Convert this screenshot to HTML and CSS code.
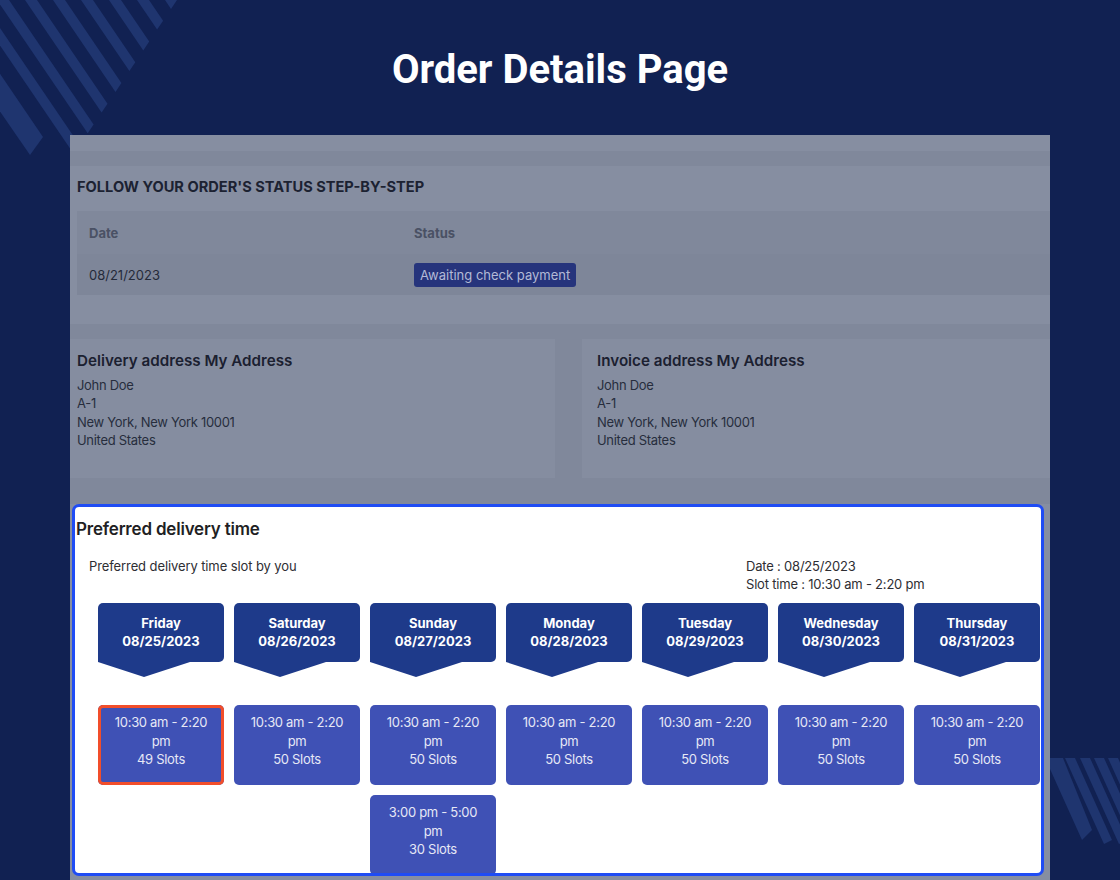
FILE: index.html
```html
<!DOCTYPE html>
<html lang="en">
<head>
<meta charset="utf-8">
<title>Order Details Page</title>
<link rel="stylesheet" href="styles.css">
</head>
<body>
<svg class="deco deco-tl" width="200" height="170" viewBox="0 0 200 170" aria-hidden="true">
  <g fill="#1f356f">
    <polygon points="165,0 177,0 171,8.9"/>
    <polygon points="137,0 149,0 163.1,20.7 157.1,29.6"/>
    <polygon points="109,0 121,0 149.2,41.5 143.3,50.4"/>
    <polygon points="81,0 93,0 135.3,62.2 129.4,71.1"/>
    <polygon points="53,0 65,0 121.4,83 115.5,91.9"/>
    <polygon points="25,0 37,0 107.5,103.7 101.6,112.6"/>
    <polygon points="-3,0 9,0 93.6,124.4 87.7,133.3"/>
    <polygon points="-31,0 -19,0 79.7,145.2 73.8,154.1"/>
    <polygon points="-77,0 -50,0 43,137 30,155"/>
  </g>
</svg>
<svg class="deco deco-br" width="80" height="110" viewBox="0 0 80 110" aria-hidden="true">
  <defs><clipPath id="brc"><rect x="10" y="18" width="70" height="92"/></clipPath></defs>
  <g fill="#1f356f" clip-path="url(#brc)">
    <polygon points="5,18 23,18 52,90 42,100"/>
    <polygon points="25,18 35,18 72,100 64,104"/>
    <polygon points="40,18 50,18 87,100 79,104"/>
    <polygon points="54,18 64,18 101,100 93,104"/>
    <polygon points="68,18 78,18 115,100 107,104"/>
  </g>
</svg>

<header class="hero">
  <h1 class="hero-title">Order Details Page</h1>
</header>

<main class="page">
  <div class="bar bar-light"></div>
  <div class="bar bar-dark"></div>

  <section class="status">
    <h2 class="status-title">FOLLOW YOUR ORDER'S STATUS STEP-BY-STEP</h2>
    <div class="status-table">
      <div class="status-row status-head">
        <div class="cell">Date</div>
        <div class="cell">Status</div>
      </div>
      <div class="status-row status-body">
        <div class="cell">08/21/2023</div>
        <div class="cell"><span class="badge">Awaiting check payment</span></div>
      </div>
    </div>
  </section>

  <section class="addresses">
    <div class="addr-card addr-left">
      <h3 class="addr-title">Delivery address My Address</h3>
      <p class="addr-lines">John Doe<br>A-1<br>New York, New York 10001<br>United States</p>
    </div>
    <div class="addr-card addr-right">
      <h3 class="addr-title">Invoice address My Address</h3>
      <p class="addr-lines">John Doe<br>A-1<br>New York, New York 10001<br>United States</p>
    </div>
  </section>

  <section class="delivery">
    <h2 class="delivery-title">Preferred delivery time</h2>
    <div class="delivery-info">
      <p class="info-left">Preferred delivery time slot by you</p>
      <p class="info-right">Date : 08/25/2023<br>Slot time : 10:30 am - 2:20 pm</p>
    </div>
    <div class="days">
      <div class="day">
        <div class="day-head">Friday<br>08/25/2023</div>
        <div class="slots">
          <div class="slot selected">10:30 am - 2:20 pm<br>49 Slots</div>
        </div>
      </div>
      <div class="day">
        <div class="day-head">Saturday<br>08/26/2023</div>
        <div class="slots">
          <div class="slot">10:30 am - 2:20 pm<br>50 Slots</div>
        </div>
      </div>
      <div class="day">
        <div class="day-head">Sunday<br>08/27/2023</div>
        <div class="slots">
          <div class="slot">10:30 am - 2:20 pm<br>50 Slots</div>
          <div class="slot">3:00 pm - 5:00 pm<br>30 Slots</div>
        </div>
      </div>
      <div class="day">
        <div class="day-head">Monday<br>08/28/2023</div>
        <div class="slots">
          <div class="slot">10:30 am - 2:20 pm<br>50 Slots</div>
        </div>
      </div>
      <div class="day">
        <div class="day-head">Tuesday<br>08/29/2023</div>
        <div class="slots">
          <div class="slot">10:30 am - 2:20 pm<br>50 Slots</div>
        </div>
      </div>
      <div class="day">
        <div class="day-head">Wednesday<br>08/30/2023</div>
        <div class="slots">
          <div class="slot">10:30 am - 2:20 pm<br>50 Slots</div>
        </div>
      </div>
      <div class="day">
        <div class="day-head">Thursday<br>08/31/2023</div>
        <div class="slots">
          <div class="slot">10:30 am - 2:20 pm<br>50 Slots</div>
        </div>
      </div>
    </div>
  </section>
</main>
</body>
</html>
```

FILE: styles.css
```css
* { box-sizing: border-box; }

html, body {
  margin: 0;
  padding: 0;
}

body {
  width: 1120px;
  height: 880px;
  overflow: hidden;
  background: #112152;
  font-family: Inter, "Noto Sans", sans-serif;
  position: relative;
}

.deco {
  position: absolute;
  z-index: 0;
}
.deco-tl { left: 0; top: 0; }
.deco-br { left: 1040px; top: 740px; }

.hero {
  position: relative;
  z-index: 1;
  height: 135px;
  padding-top: 47px;
}

.hero-title {
  margin: 0;
  text-align: center;
  font-family: Roboto, "Liberation Sans", sans-serif;
  font-weight: 700;
  font-size: 40px;
  line-height: 46px;
  color: #ffffff;
}

.page {
  position: relative;
  z-index: 1;
  margin-left: 70px;
  width: 980px;
  height: 745px;
  background: #868ea1;
  overflow: hidden;
}

.bar { height: 15px; }
.bar-light { height: 16px; background: #868ea1; }
.bar-dark { background: #80889b; }

.status {
  background: #868ea1;
  padding: 11px 0 29px 7px;
}

.status-title {
  margin: 0 0 14px;
  font-size: 14.6px;
  line-height: 20px;
  font-weight: 700;
  color: #1c2232;
  letter-spacing: 0;
}

.status-table {
  background: #80889b;
}

.status-row {
  display: grid;
  grid-template-columns: 325px 1fr;
  align-items: center;
}

.status-head {
  height: 43px;
  background: #80889b;
}

.status-body {
  height: 41px;
  background: #7e8699;
}

.cell {
  padding-left: 12px;
  font-size: 13px;
  color: #252b3a;
}

.status-head .cell {
  font-weight: 700;
  color: #4a5164;
}

.badge {
  display: inline-block;
  height: 24px;
  line-height: 24px;
  padding: 0 6px;
  border-radius: 3px;
  background: #26347c;
  color: #b3bad6;
  font-size: 13px;
  letter-spacing: 0;
}

.addresses {
  display: flex;
  gap: 27px;
  background: #80889b;
  padding: 15px 0 26px;
}

.addr-card {
  height: 139px;
  background: #858da0;
  padding-top: 12px;
}

.addr-left {
  width: 485px;
  padding-left: 7px;
}

.addr-right {
  flex: 1;
  padding-left: 15px;
}

.addr-title {
  margin: 0 0 5px;
  font-size: 15.2px;
  line-height: 20px;
  font-weight: 600;
  color: #1b2030;
  letter-spacing: 0;
}

.addr-lines {
  margin: 0;
  font-size: 13px;
  line-height: 18.3px;
  color: #272d3d;
  letter-spacing: -0.3px;
}

.delivery {
  margin-left: 2px;
  width: 972px;
  height: 372px;
  background: #ffffff;
  border: 3px solid #1f4cf4;
  border-radius: 7px;
  padding: 10px 0 0 1px;
  overflow: hidden;
}

.delivery-title {
  margin: 0;
  font-size: 17px;
  line-height: 24px;
  font-weight: 600;
  color: #1f1f24;
  letter-spacing: -0.2px;
}

.delivery-info {
  display: flex;
  margin-top: 16px;
  font-size: 13px;
  line-height: 18px;
  color: #2e2e33;
  letter-spacing: -0.1px;
}

.info-left {
  flex: 1;
  margin: 0;
  padding-left: 13px;
}

.info-right {
  width: 295px;
  margin: 0;
  letter-spacing: -0.2px;
}

.days {
  display: flex;
  gap: 10px;
  margin: 10px 0 0 22px;
}

.day {
  width: 126px;
  display: flex;
  flex-direction: column;
}

.day-head {
  position: relative;
  height: 59px;
  padding-top: 11px;
  background: #1e3a8a;
  border-radius: 5px;
  color: #ffffff;
  font-size: 13px;
  line-height: 18px;
  font-weight: 700;
  text-align: center;
}

.day-head::after {
  content: "";
  position: absolute;
  left: 0;
  top: 100%;
  width: 92px;
  height: 15px;
  background: #1e3a8a;
  clip-path: polygon(0 0, 100% 0, 50% 100%);
}

.day-head::before {
  content: "";
  position: absolute;
  left: 0;
  bottom: 0;
  width: 10px;
  height: 10px;
  background: #1e3a8a;
}

.slots {
  display: flex;
  flex-direction: column;
  gap: 10px;
  margin-top: 43px;
}

.slot {
  height: 80px;
  padding: 8px 10px 0;
  background: #3f51b5;
  border-radius: 5px;
  color: #e6e8f5;
  font-size: 13px;
  line-height: 18.5px;
  text-align: center;
  letter-spacing: -0.3px;
}

.slot.selected {
  box-shadow: inset 0 0 0 3px #f24e2a;
}
```
